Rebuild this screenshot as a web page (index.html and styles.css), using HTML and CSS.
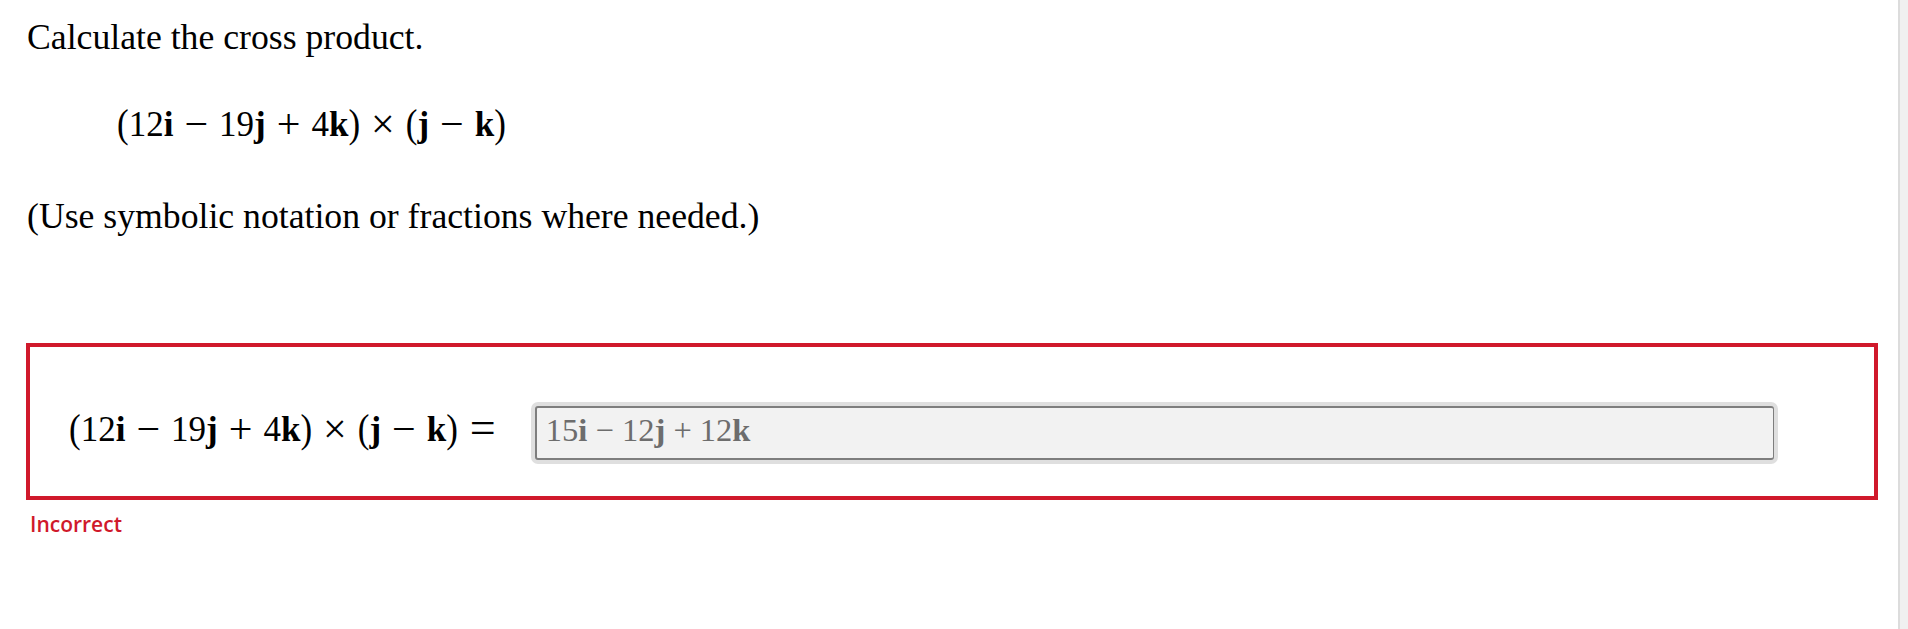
FILE: index.html
```html
<!DOCTYPE html>
<html lang="en">
<head>
<meta charset="utf-8">
<title>Cross product</title>
<link rel="stylesheet" href="styles.css">
</head>
<body>
<main class="content">
  <p class="text first">Calculate the cross product.</p>
  <div class="display">
    <span class="math"><span class="paren">(</span>12<b>i</b><span class="op">−</span>19<b>j</b><span class="op">+</span>4<b>k</b><span class="paren">)</span><span class="op">×</span><span class="paren">(</span><b>j</b><span class="op">−</span><b>k</b><span class="paren">)</span></span>
  </div>
  <p class="text note">(Use symbolic notation or fractions where needed.)</p>
  <section class="answer-box">
    <span class="math"><span class="paren">(</span>12<b>i</b><span class="op">−</span>19<b>j</b><span class="op">+</span>4<b>k</b><span class="paren">)</span><span class="op">×</span><span class="paren">(</span><b>j</b><span class="op">−</span><b>k</b><span class="paren">)</span><span class="eq">=</span></span>
    <div class="field"><div class="field-inner">15<b>i</b> − 12<b>j</b> + 12<b>k</b></div></div>
  </section>
  <div class="feedback">Incorrect</div>
</main>
<div class="scrollbar"></div>
</body>
</html>
```
FILE: styles.css
```css
html, body {
  margin: 0;
  padding: 0;
  height: 100%;
  background: #ffffff;
}
body {
  display: flex;
  overflow: hidden;
  font-family: "Liberation Serif", "Times New Roman", serif;
  color: #000;
}
.content {
  flex: 1;
  min-width: 0;
  padding: 0 20px 0 26px;
}
.text {
  font-size: 35.7px;
  line-height: 44px;
  margin: 0 0 0 1px;
}
.first {
  margin-top: 15px;
}
.display {
  margin: 44px 0 0 91px;
  line-height: 44px;
}
.note {
  margin-top: 41px;
}
.math {
  font-size: 35px;
  line-height: 44px;
  white-space: nowrap;
}
.math b {
  font-weight: 700;
}
.paren {
  display: inline-block;
  transform: scaleY(1.12);
}
.op {
  display: inline-block;
  font-size: 42px;
  line-height: 0;
  margin: 0 11px;
  vertical-align: -2px;
}
.eq {
  display: inline-block;
  font-size: 46px;
  line-height: 0;
  margin-left: 12px;
  vertical-align: -2px;
}
.answer-box {
  margin-top: 105px;
  border: 4px solid #d0192b;
  padding: 55px 96px 32px 39px;
  display: flex;
  align-items: baseline;
}
.answer-box .math {
  flex: none;
  margin-right: 35px;
}
.field {
  flex: 1;
  background: #dfdfdf;
  border-radius: 7px;
  padding: 4px;
}
.field-inner {
  border: 2px solid #7e7e7e;
  border-right-width: 1px;
  border-radius: 3px;
  background: #f2f2f2;
  color: #6d6d6d;
  font-size: 32.5px;
  line-height: 44px;
  padding: 0 8px 6px 9px;
  white-space: nowrap;
}
.feedback {
  margin: 10px 0 0 4px;
  font-family: "Open Sans", "Noto Sans", sans-serif;
  font-weight: 600;
  font-size: 21px;
  line-height: 28px;
  color: #d0192b;
}
.scrollbar {
  flex: none;
  width: 8px;
  background: #f0f0f0;
  border-left: 2px solid #dcdcdc;
}
```
